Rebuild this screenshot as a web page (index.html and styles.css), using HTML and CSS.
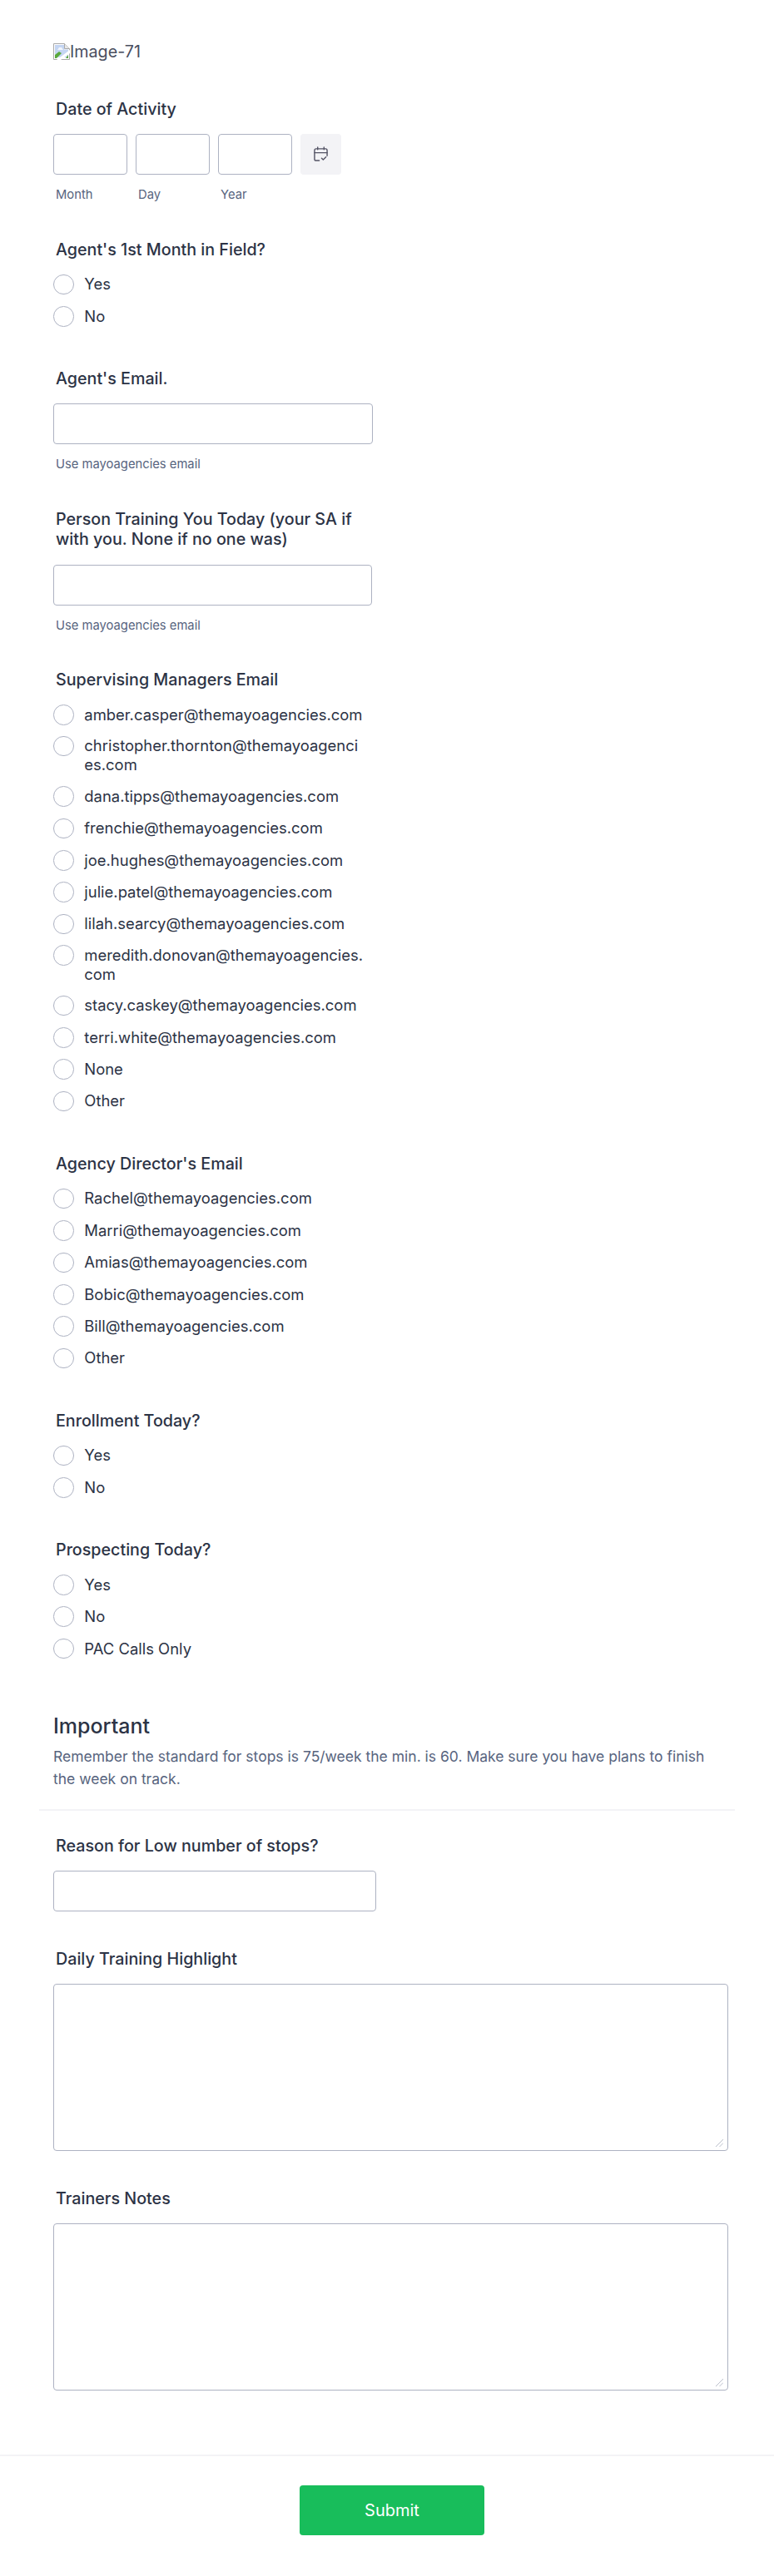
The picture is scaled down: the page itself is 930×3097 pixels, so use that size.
FILE: index.html
```html
<!DOCTYPE html>
<html lang="en">
<head>
<meta charset="utf-8">
<title>Daily Activity</title>
<link rel="stylesheet" href="styles.css">
</head>
<body>
<form class="form">
  <div class="logo">
    <svg class="broken" viewBox="0 0 20 20" width="20" height="20" aria-hidden="true">
      <path d="M.5.5h13l6 6v13H.5z" fill="#fff" stroke="#a9a9a9"/>
      <path d="M13.5.5v6h6" fill="#e8e8e8" stroke="#a9a9a9"/>
      <rect x="2" y="2" width="11" height="15" fill="#c4d5f2"/>
      <rect x="13" y="7.5" width="5" height="9.5" fill="#c4d5f2"/>
      <path d="M5 8l2-3h3l2 3z" fill="#f2f6fc"/>
      <path d="M2 18v-4l5-4 3 2-6 6z" fill="#5aa83c"/>
      <path d="M15 18l3-4v4z" fill="#5aa83c"/>
      <path d="M4 20L20 8v4L9 20z" fill="#fff"/>
    </svg><span>Image-71</span>
  </div>

  <section class="q q-date">
    <label class="label">Date of Activity</label>
    <div class="date-row">
      <div class="date-col"><div class="input"></div><span class="sub">Month</span></div>
      <div class="date-col"><div class="input"></div><span class="sub">Day</span></div>
      <div class="date-col"><div class="input"></div><span class="sub">Year</span></div>
      <div class="cal">
        <svg viewBox="0 0 18 19" width="17" height="18" fill="none" stroke="#545465" stroke-width="1.5" stroke-linecap="round" stroke-linejoin="round" aria-hidden="true">
          <path d="M7 18H3a2 2 0 0 1-2-2V5a2 2 0 0 1 2-2h12a2 2 0 0 1 2 2v7"/>
          <path d="M1 8h16M5 1v3M13 1v3"/>
          <path d="M10 15l2 2 3.500-3.500"/>
        </svg>
      </div>
    </div>
  </section>

  <section class="q q-radio">
    <label class="label">Agent's 1st Month in Field?</label>
    <div class="radio"><i></i><span>Yes</span></div>
    <div class="radio"><i></i><span>No</span></div>
  </section>

  <section class="q q-text">
    <label class="label">Agent's Email.</label>
    <div class="input wide-a"></div>
    <span class="sub">Use mayoagencies email</span>
  </section>

  <section class="q q-text">
    <label class="label narrow">Person Training You Today (your SA if with you. None if no one was)</label>
    <div class="input wide-b"></div>
    <span class="sub">Use mayoagencies email</span>
  </section>

  <section class="q q-radio">
    <label class="label">Supervising Managers Email</label>
    <div class="radio"><i></i><span>amber.casper@themayoagencies.com</span></div>
    <div class="radio two"><i></i><span>christopher.thornton@themayoagencies.com</span></div>
    <div class="radio"><i></i><span>dana.tipps@themayoagencies.com</span></div>
    <div class="radio"><i></i><span>frenchie@themayoagencies.com</span></div>
    <div class="radio"><i></i><span>joe.hughes@themayoagencies.com</span></div>
    <div class="radio"><i></i><span>julie.patel@themayoagencies.com</span></div>
    <div class="radio"><i></i><span>lilah.searcy@themayoagencies.com</span></div>
    <div class="radio two"><i></i><span>meredith.donovan@themayoagencies.com</span></div>
    <div class="radio"><i></i><span>stacy.caskey@themayoagencies.com</span></div>
    <div class="radio"><i></i><span>terri.white@themayoagencies.com</span></div>
    <div class="radio"><i></i><span>None</span></div>
    <div class="radio"><i></i><span>Other</span></div>
  </section>

  <section class="q q-radio">
    <label class="label">Agency Director's Email</label>
    <div class="radio"><i></i><span>Rachel@themayoagencies.com</span></div>
    <div class="radio"><i></i><span>Marri@themayoagencies.com</span></div>
    <div class="radio"><i></i><span>Amias@themayoagencies.com</span></div>
    <div class="radio"><i></i><span>Bobic@themayoagencies.com</span></div>
    <div class="radio"><i></i><span>Bill@themayoagencies.com</span></div>
    <div class="radio"><i></i><span>Other</span></div>
  </section>

  <section class="q q-radio">
    <label class="label">Enrollment Today?</label>
    <div class="radio"><i></i><span>Yes</span></div>
    <div class="radio"><i></i><span>No</span></div>
  </section>

  <section class="q q-radio">
    <label class="label">Prospecting Today?</label>
    <div class="radio"><i></i><span>Yes</span></div>
    <div class="radio"><i></i><span>No</span></div>
    <div class="radio"><i></i><span>PAC Calls Only</span></div>
  </section>

  <header class="head">
    <h2>Important</h2>
    <p>Remember the standard for stops is 75/week the min. is 60. Make sure you have plans to finish the week on track.</p>
  </header>

  <section class="q q-low">
    <label class="label">Reason for Low number of stops?</label>
    <div class="input wide-c"></div>
  </section>

  <section class="q q-low">
    <label class="label">Daily Training Highlight</label>
    <div class="area"><svg class="grip" viewBox="0 0 9 9" width="9" height="9" aria-hidden="true"><path d="M0 9l9-9M4.500 9L9 4.500" stroke="#bcc0cc" stroke-width="1" fill="none"/></svg></div>
  </section>

  <section class="q q-low">
    <label class="label">Trainers Notes</label>
    <div class="area"><svg class="grip" viewBox="0 0 9 9" width="9" height="9" aria-hidden="true"><path d="M0 9l9-9M4.500 9L9 4.500" stroke="#bcc0cc" stroke-width="1" fill="none"/></svg></div>
  </section>

  <footer class="foot">
    <button class="submit" type="button">Submit</button>
  </footer>
</form>
</body>
</html>
```
FILE: styles.css
```css
* { box-sizing: border-box; }
html, body { margin: 0; padding: 0; background: #fff; }
body { font-family: Inter, "Liberation Sans", sans-serif; color: #2c3345; }
.form { width: 930px; height: 3097px; overflow: hidden; padding-top: 50px; }

.logo { display: flex; align-items: center; height: 24px; margin: 0 0 44.7px 64px; font-size: 19.7px; line-height: 24px; color: #4a4f5f; }
.broken { flex: none; }

.q { padding-left: 64px; padding-right: 55px; }
.label { display: block; margin: 0 0 17.6px 3px; font-size: 19.7px; line-height: 24.6px; font-weight: 500; color: #2c3345; }
.narrow { width: 381px; }
.sub { display: block; margin: 15px 0 0 3px; font-size: 14.77px; line-height: 18px; color: #57647e; }

.input { height: 49px; background: #fff; border: 1px solid #adb2c2; border-radius: 4px; }
.wide-a { width: 384px; }
.wide-b { width: 383px; }
.wide-c { width: 388px; }

.q-date, .q-text { margin-bottom: 44.7px; }
.date-row { display: flex; gap: 10px; }
.date-col { width: 89px; }
.cal { display: flex; align-items: center; justify-content: center; width: 49px; height: 49px; border-radius: 4px; background: #f3f3f6; }

.q-radio { margin-bottom: 50.2px; }
.radio { display: flex; gap: 12.7px; width: 375px; margin-bottom: 13.8px; font-size: 18.46px; line-height: 23.3px; color: #2c3345; }
.radio:last-child { margin-bottom: 0; }
.radio i { flex: none; width: 24.6px; height: 24.6px; border: 1px solid #adb2c2; border-radius: 50%; background: #fff; }
.radio span { min-width: 0; padding-top: .65px; overflow-wrap: anywhere; }
.two { margin-top: -1.3px; margin-bottom: 13.5px; }

.head { margin: 66px 47px 30px; padding: 0 17px 23.5px; border-bottom: 2px solid #f3f3f6; }
.head h2 { margin: 0; font-size: 25px; line-height: 30px; font-weight: 500; color: #2c3345; }
.head p { margin: 7.5px 0 0; font-size: 17.5px; line-height: 27px; color: #57647e; }

.q-low { margin-bottom: 45.4px; }
.q-low .label { margin-bottom: 17px; }
.area { position: relative; height: 201px; border: 1px solid #adb2c2; border-radius: 4px; background: #fff; }
.grip { position: absolute; right: 5px; bottom: 4px; }

.foot { display: flex; justify-content: center; margin-top: 77px; padding: 35px 0 0 12px; border-top: 2px solid #f3f3f6; }
.submit { width: 222px; height: 60px; border: 0; border-radius: 4px; background: #18bd5b; color: #fff; font: 400 20px Inter, "Liberation Sans", sans-serif; }
```
